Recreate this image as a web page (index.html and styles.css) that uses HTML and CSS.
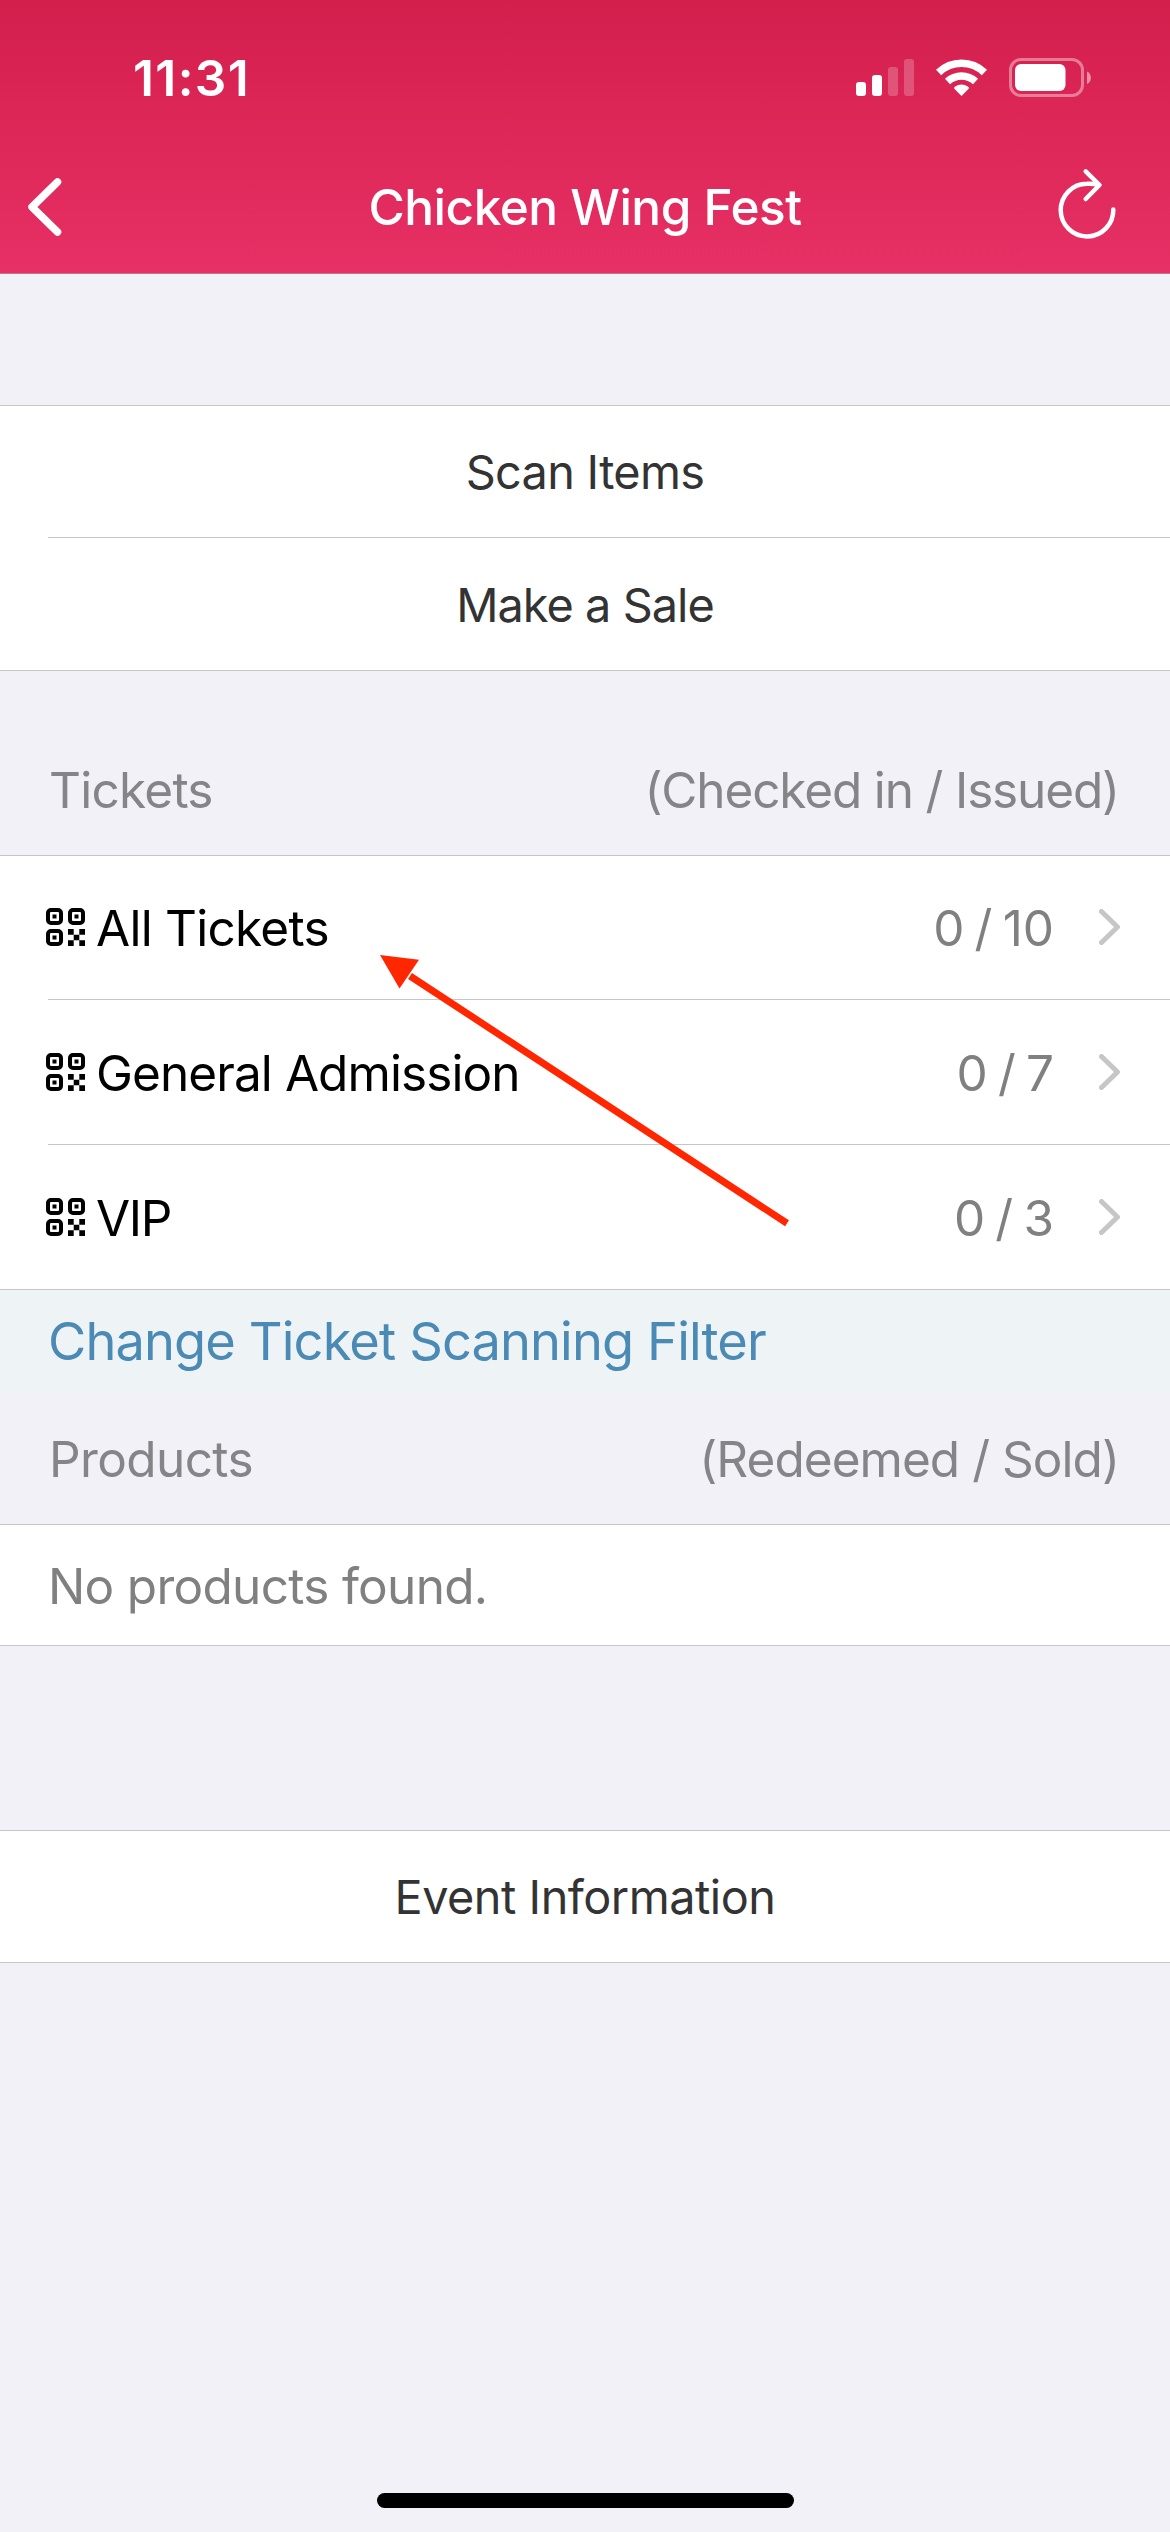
FILE: index.html
```html
<!DOCTYPE html>
<html lang="en">
<head>
<meta charset="utf-8">
<title>Chicken Wing Fest</title>
<link rel="stylesheet" href="styles.css">
</head>
<body>
<svg class="defs" width="0" height="0">
  <symbol id="qr" viewBox="0 0 39 38">
    <g fill="none" stroke="currentColor" stroke-width="4">
      <rect x="2" y="2" width="13" height="13" rx="3"/>
      <rect x="24" y="2" width="13" height="13" rx="3"/>
      <rect x="2" y="23" width="13" height="13" rx="3"/>
    </g>
    <path fill="currentColor" d="M6.500 6.500h4v4h-4zM28.500 6.500h4v4h-4zM6.500 27.500h4v4h-4zM22 21h5.700v5.700h-5.700zM33.300 21h5.700v5.700h-5.700zM27.700 26.700h5.600v5.600h-5.600zM22 32.300h5.700v5.700h-5.700zM33.300 32.300h5.700v5.700h-5.700z"/>
  </symbol>
  <symbol id="next" viewBox="0 0 22 36">
    <path d="M2.500 2.500 18.500 18 2.500 33.500" fill="none" stroke="currentColor" stroke-width="5" stroke-linecap="round" stroke-linejoin="round"/>
  </symbol>
</svg>
<div class="screen">
  <header class="top">
    <div class="status">
      <span class="clock">11:31</span>
      <svg class="signals" width="236" height="40" viewBox="856 58 236 40">
        <g fill="#fff">
          <rect x="856" y="82" width="10" height="14" rx="3"/>
          <rect x="872" y="75" width="10" height="21" rx="3"/>
          <g opacity=".22">
            <rect x="888" y="67" width="10" height="29" rx="3"/>
            <rect x="904" y="59" width="10" height="37" rx="3"/>
          </g>
          <path d="M961.500 96 954.300 88.700Q953.500 87.500 954.800 86.700Q961.500 82.500 968.200 86.700Q969.500 87.500 968.700 88.700Z"/>
        </g>
        <g fill="none" stroke="#fff" stroke-width="7.500">
          <path d="M947.500 81.500a20.500 20.500 0 0 1 28 0"/>
          <path d="M938.600 72.500a33 33 0 0 1 45.800 0"/>
        </g>
        <rect x="1010.500" y="59.500" width="72" height="36" rx="10.500" fill="none" stroke="#fff" stroke-opacity=".4" stroke-width="3"/>
        <rect x="1015" y="64" width="50.500" height="27" rx="6" fill="#fff"/>
        <path d="M1087 71.500a7 7 0 0 1 0 12.500z" fill="#fff" fill-opacity=".5"/>
      </svg>
    </div>
    <div class="nav">
      <svg class="back" width="36" height="60" viewBox="26 177 36 60"><path d="M57.500 182 32 207 57.500 232" fill="none" stroke="#fff" stroke-width="7.500" stroke-linecap="round" stroke-linejoin="round"/></svg>
      <h1 class="title">Chicken Wing Fest</h1>
      <svg class="reload" width="60" height="72" viewBox="1057 168 60 72"><g fill="none" stroke="#fff" stroke-width="4.500" stroke-linecap="round" stroke-linejoin="round"><path d="M1113.300 209.500A26.300 26.300 0 1 1 1087 183.800Q1093 183.500 1099 185"/><path d="M1085.700 171.300 1099.500 185 1085.700 199"/></g></svg>
    </div>
  </header>
  <main>
    <section class="group actions">
      <div class="action t-scan">Scan Items</div>
      <div class="action t-sale">Make a Sale</div>
    </section>
    <div class="heading"><span class="t-tickets">Tickets</span><span class="t-checked">(Checked in / Issued)</span></div>
    <section class="group tickets">
      <div class="ticket"><svg class="qr"><use href="#qr"/></svg><span class="name t-all">All Tickets</span><span class="count">0 / 10</span><svg class="next"><use href="#next"/></svg></div>
      <div class="ticket"><svg class="qr"><use href="#qr"/></svg><span class="name t-general">General Admission</span><span class="count">0 / 7</span><svg class="next"><use href="#next"/></svg></div>
      <div class="ticket"><svg class="qr"><use href="#qr"/></svg><span class="name t-vip">VIP</span><span class="count">0 / 3</span><svg class="next"><use href="#next"/></svg></div>
      <svg class="pointer" width="412" height="276" viewBox="379 953 412 276"><path d="M410 976 787 1223.300" stroke="#ff2600" stroke-width="7"/><path d="M380 955 419 959.700 399.500 988.500z" fill="#ff2600"/></svg>
    </section>
    <a class="filter">Change Ticket Scanning Filter</a>
    <div class="heading products"><span class="t-products">Products</span><span class="t-redeemed">(Redeemed / Sold)</span></div>
    <section class="group empty">No products found.</section>
    <section class="group info"><div class="action t-event">Event Information</div></section>
  </main>
  <div class="home"></div>
</div>
</body>
</html>
```
FILE: styles.css
```css
* { box-sizing: border-box; }
body { margin: 0; background: #f2f1f7; font-family: Inter, "Liberation Sans", sans-serif; font-size: 49.5px; }
.defs { position: absolute; }
.screen { width: 1170px; height: 2532px; display: flex; flex-direction: column; white-space: nowrap; position: relative; }
.top { height: 274px; background: linear-gradient(#d31f4c, #e73065); border-bottom: 1px solid #c4768f; color: #fff; }
.status { height: 156px; padding: 0 78px 0 133px; display: flex; justify-content: space-between; align-items: center; }
.clock { font-weight: 600; letter-spacing: 1.4px; }
.nav { height: 102px; padding: 0 53px 0 26px; display: grid; grid-template-columns: 87px 1fr 60px; align-items: center; }
.reload { margin-top: -6px; }
.title { margin: 0; font-size: 49.5px; font-weight: 500; text-align: center; letter-spacing: -.5px; }
.group { background: #fff; border: solid #c6c6c8; border-width: 1px 0; }
.actions { margin-top: 131px; }
.action { height: 131px; font-size: 46.8px; color: #333; display: flex; align-items: center; justify-content: center; }
.action + .action { height: 133px; padding-top: 2px; background: linear-gradient(#c6c6c8, #c6c6c8) 48px 0 / 100% 1px no-repeat; }
.heading { height: 184px; padding: 54px 51px 0 49px; color: #858589; display: flex; justify-content: space-between; align-items: center; }
.tickets { position: relative; }
.ticket { height: 143px; padding: 0 49px 1px 46px; display: flex; align-items: center; }
.ticket + .ticket { height: 145px; padding-top: 1px; padding-bottom: 0; background: linear-gradient(#c6c6c8, #c6c6c8) 48px 0 / 100% 1px no-repeat; }
.qr { width: 39px; height: 38px; color: #000; }
.name { margin-left: 11px; padding-top: 2px; flex: 1; color: #000; }
.count { padding-top: 2px; color: #808080; word-spacing: -3.7px; }
.next { width: 22px; height: 36px; margin-left: 45px; color: #c6c6c8; }
.pointer { position: absolute; left: 379px; top: 97px; }
.filter { height: 102px; padding-left: 48px; background: #eef3f6; color: #4a8ab5; font-size: 52.4px; letter-spacing: -.88px; display: flex; align-items: center; }
.products { height: 132px; padding-top: 2px; }
.empty { height: 122px; padding: 2px 0 0 48px; display: flex; align-items: center; color: #808080; letter-spacing: -.7px; }
.info { margin-top: 184px; }
.home { position: absolute; left: 377px; top: 2493px; width: 417px; height: 15px; border-radius: 8px; background: #000; }

/* Per-label tracking */
.t-scan { letter-spacing: -.7px; }
.t-sale { letter-spacing: -.95px; }
.t-event { letter-spacing: -.48px; }
.t-tickets { letter-spacing: -.75px; }
.t-checked { letter-spacing: -1.15px; }
.t-all { letter-spacing: -.75px; }
.t-general { letter-spacing: -.92px; }
.t-vip { letter-spacing: -1.4px; }
.t-products { letter-spacing: -.6px; }
.t-redeemed { letter-spacing: -.96px; }
```
